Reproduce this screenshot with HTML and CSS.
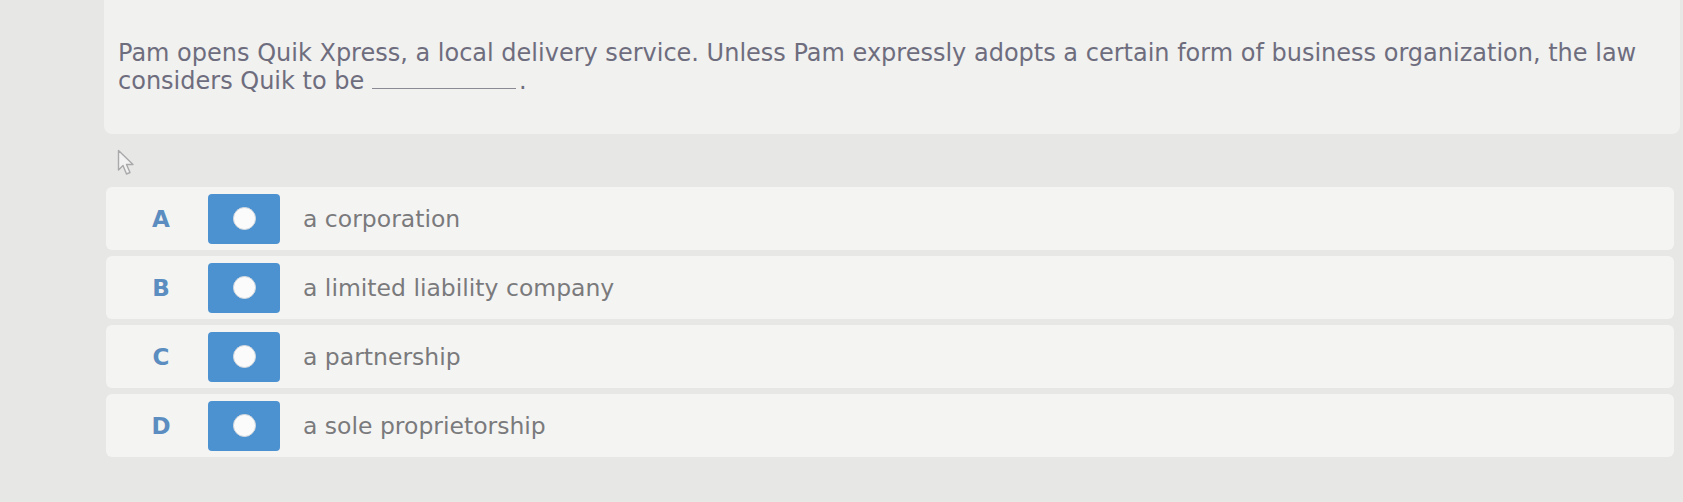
FILE: index.html
```html
<!DOCTYPE html>
<html lang="en">
<head>
    <meta charset="UTF-8">
    <meta name="viewport" content="width=device-width, initial-scale=1.0">
    <title>Question</title>
    <link rel="stylesheet" href="styles.css">
</head>
<body>
    <!-- Enunciado -->
    <div class="question">
        <p>Pam opens Quik Xpress, a local delivery service. Unless Pam expressly adopts a certain form of business organization, the law considers Quik to be <span class="blank"></span>.</p>
    </div>

    <!-- Puntero -->
    <div class="cursor-row">
        <svg class="cursor" width="20" height="27" viewBox="0 0 20 27">
            <path d="M1.5 1.5 L1.5 21 L6 16.5 L9.5 25 L13 23.5 L9.5 15.5 L16 15.5 Z" fill="#f2f2f2" stroke="#a9a9ab" stroke-width="1.4" stroke-linejoin="round"/>
        </svg>
    </div>

    <!-- Opciones -->
    <div class="options">
        <div class="option">
            <span class="letter">A</span>
            <span class="radio"><span class="dot"></span></span>
            <span class="text">a corporation</span>
        </div>
        <div class="option">
            <span class="letter">B</span>
            <span class="radio"><span class="dot"></span></span>
            <span class="text">a limited liability company</span>
        </div>
        <div class="option">
            <span class="letter">C</span>
            <span class="radio"><span class="dot"></span></span>
            <span class="text">a partnership</span>
        </div>
        <div class="option">
            <span class="letter">D</span>
            <span class="radio"><span class="dot"></span></span>
            <span class="text">a sole proprietorship</span>
        </div>
    </div>
</body>
</html>
```

FILE: styles.css
```css
/* General */
* {
    margin: 0;
    padding: 0;
    box-sizing: border-box;
}

body {
    background: #e7e7e5;
    font-family: 'DejaVu Sans', Verdana, sans-serif;
    height: 502px;
    overflow: hidden;
}

/* Enunciado */
.question {
    background: #f1f1f0;
    margin: 0 3px 0 104px;
    padding: 39px 20px 0 14px;
    border-radius: 0 0 8px 8px;
    height: 134px;
}

.question p {
    font-size: 24px;
    line-height: 28px;
    color: #6e6d7e;
}

.blank {
    display: inline-block;
    width: 144px;
    border-bottom: 1px solid #8a8a94;
    margin-right: 3px;
}

/* Puntero */
.cursor-row {
    height: 53px;
    padding: 15px 0 0 117px;
}

.cursor {
    display: block;
}

/* Opciones */
.options {
    display: flex;
    flex-direction: column;
    gap: 6px;
    margin: 0 9px 0 106px;
}

.option {
    display: flex;
    align-items: center;
    height: 63px;
    background: #f4f4f3;
    border-radius: 6px;
}

.letter {
    width: 106px;
    text-align: center;
    font-weight: bold;
    font-size: 23px;
    color: #5b8dc0;
    padding-left: 4px;
}

.radio {
    width: 72px;
    height: 50px;
    margin-left: -4px;
    border-radius: 4px;
    background: #4c92d1;
    display: flex;
    align-items: center;
    justify-content: center;
}

.dot {
    width: 23px;
    height: 23px;
    border-radius: 50%;
    background: #fbfbfb;
    border: 1px solid #d4d8dc;
}

.text {
    margin-left: 23px;
    font-size: 23.5px;
    color: #7a7a7c;
}
```
